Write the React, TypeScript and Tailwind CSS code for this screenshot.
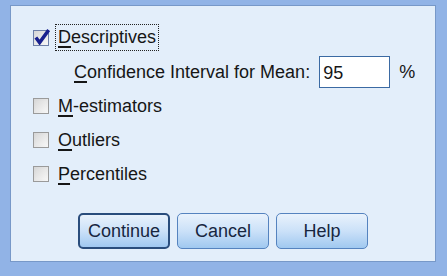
import React from 'react';

function Check({ checked }: { checked?: boolean }) {
  return (
    <div
      className={`w-[16px] h-[16px] shrink-0 border ${checked ? 'border-[#6d7fa8]' : 'border-[#9a9a9a]'} bg-gradient-to-br from-[#d6d6d6] to-[#f7f7f7] p-[2px]`}
    >
      <div className="w-full h-full bg-gradient-to-br from-[#dcdcdc] to-[#f4f4f4] relative">
        {checked && (
          <svg viewBox="0 0 12 12" className="absolute -left-[2px] -top-[4px] w-[16px] h-[16px]">
            <path d="M1.4 6.4 L4.2 10.2 L11 0.8" fill="none" stroke="#18208f" strokeWidth="2.6" />
          </svg>
        )}
      </div>
    </div>
  );
}

function Mn({ k, rest }: { k: string; rest: string }) {
  return (
    <span>
      <span className="underline underline-offset-[3px] decoration-[1.5px]">{k}</span>
      {rest}
    </span>
  );
}

function Btn({ label, primary }: { label: string; primary?: boolean }) {
  return (
    <button
      className={`w-[92px] h-[36px] rounded-[5px] bg-gradient-to-b from-[#e9f2fc] via-[#cbe1f8] to-[#a0c8f0] text-[#17263f] text-[18px] ${primary ? 'border-2 border-[#2a4d7c]' : 'border border-[#5583bf]'}`}
    >
      {label}
    </button>
  );
}

export default function App() {
  return (
    <div className="w-[447px] h-[280px] bg-white font-['Liberation_Sans',Arial,sans-serif] text-[#161616] text-[18px]">
      <div className="h-[276px] bg-[#91b3e6] pl-[10px] pt-[5px] pr-[11px] pb-[14px] flex">
        <div className="flex-1 bg-[#e3eefa] border border-[#7798c8] flex flex-col pl-[22px]">
          <div className="mt-[18px] h-[27px] flex items-center">
            <Check checked />
            <div className="ml-[6px] h-[27px] px-[2px] border border-dotted border-[#222] flex items-center">
              <Mn k="D" rest="escriptives" />
            </div>
          </div>
          <div className="mt-[5px] h-[32px] flex items-center pl-[41px]">
            <Mn k="C" rest="onfidence Interval for Mean:" />
            <div className="ml-[9px] w-[71px] h-[32px] bg-white border border-[#3b6aa3] flex items-center pl-[3px] pt-[2px]">
              95
            </div>
            <span className="ml-[9px]">%</span>
          </div>
          <div className="mt-[8px] h-[20px] flex items-center">
            <Check />
            <span className="ml-[9px]"><Mn k="M" rest="-estimators" /></span>
          </div>
          <div className="mt-[14px] h-[20px] flex items-center">
            <Check />
            <span className="ml-[9px]"><Mn k="O" rest="utliers" /></span>
          </div>
          <div className="mt-[14px] h-[20px] flex items-center">
            <Check />
            <span className="ml-[9px]"><Mn k="P" rest="ercentiles" /></span>
          </div>
          <div className="mt-[29px] flex gap-[7px] pl-[45px]">
            <Btn label="Continue" primary />
            <Btn label="Cancel" />
            <Btn label="Help" />
          </div>
        </div>
      </div>
    </div>
  );
}
